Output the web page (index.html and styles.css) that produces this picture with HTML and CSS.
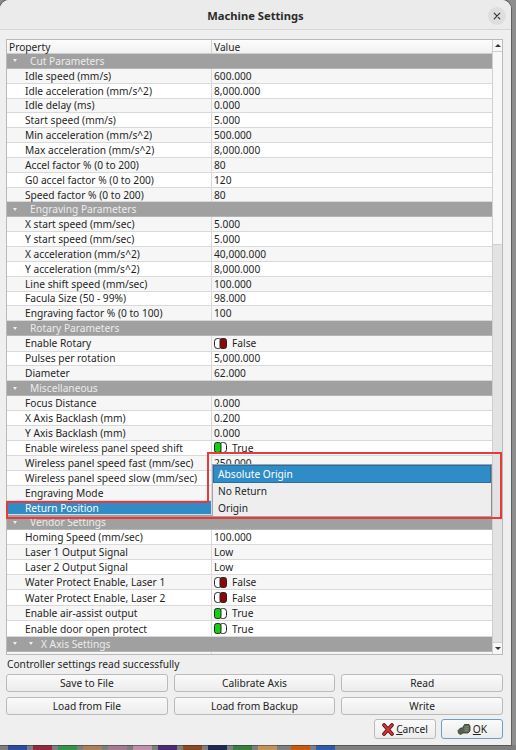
FILE: index.html
```html
<!DOCTYPE html>
<html>
<head>
<meta charset="utf-8">
<title>Machine Settings</title>
<link rel="stylesheet" href="styles.css">
</head>
<body>
<div class="desk">
  <div class="dialog">
    <div class="titlebar">
      <span></span>
      <span class="title">Machine Settings</span>
      <span class="close"><svg width="18" height="18" viewBox="0 0 18 18"><circle cx="9" cy="9" r="9" fill="#dedede"/><path d="M6.2 6.2 L11.8 11.8 M11.8 6.2 L6.2 11.8" stroke="#333" stroke-width="1.2" stroke-linecap="round"/></svg></span>
    </div>
    <div class="content">
      <div class="frame">
        <div class="tree">
          <div class="hdr"><div class="c1">Property</div><div class="c2">Value</div></div>

          <div class="sec"><span class="tri"></span>Cut Parameters</div>
          <div class="row a"><div class="c1">Idle speed (mm/s)</div><div class="c2">600.000</div></div>
          <div class="row"><div class="c1">Idle acceleration (mm/s^2)</div><div class="c2">8,000.000</div></div>
          <div class="row a"><div class="c1">Idle delay (ms)</div><div class="c2">0.000</div></div>
          <div class="row"><div class="c1">Start speed (mm/s)</div><div class="c2">5.000</div></div>
          <div class="row a"><div class="c1">Min acceleration (mm/s^2)</div><div class="c2">500.000</div></div>
          <div class="row"><div class="c1">Max acceleration (mm/s^2)</div><div class="c2">8,000.000</div></div>
          <div class="row a"><div class="c1">Accel factor % (0 to 200)</div><div class="c2">80</div></div>
          <div class="row"><div class="c1">G0 accel factor % (0 to 200)</div><div class="c2">120</div></div>
          <div class="row a"><div class="c1">Speed factor % (0 to 200)</div><div class="c2">80</div></div>

          <div class="sec"><span class="tri"></span>Engraving Parameters</div>
          <div class="row a"><div class="c1">X start speed (mm/sec)</div><div class="c2">5.000</div></div>
          <div class="row"><div class="c1">Y start speed (mm/sec)</div><div class="c2">5.000</div></div>
          <div class="row a"><div class="c1">X acceleration (mm/s^2)</div><div class="c2">40,000.000</div></div>
          <div class="row"><div class="c1">Y acceleration (mm/s^2)</div><div class="c2">8,000.000</div></div>
          <div class="row a"><div class="c1">Line shift speed (mm/sec)</div><div class="c2">100.000</div></div>
          <div class="row"><div class="c1">Facula Size (50 - 99%)</div><div class="c2">98.000</div></div>
          <div class="row a"><div class="c1">Engraving factor % (0 to 100)</div><div class="c2">100</div></div>

          <div class="sec"><span class="tri"></span>Rotary Parameters</div>
          <div class="row a tg"><div class="c1">Enable Rotary</div><div class="c2"><svg class="tog" width="13" height="11" viewBox="0 0 13 11"><rect x="0.5" y="0.5" width="7" height="10" rx="3" fill="#fff" stroke="#222"/><rect x="6" y="0.5" width="6.5" height="10" rx="2.2" fill="#8a0a0a" stroke="#222"/></svg>False</div></div>
          <div class="row"><div class="c1">Pulses per rotation</div><div class="c2">5,000.000</div></div>
          <div class="row a"><div class="c1">Diameter</div><div class="c2">62.000</div></div>

          <div class="sec"><span class="tri"></span>Miscellaneous</div>
          <div class="row a"><div class="c1">Focus Distance</div><div class="c2">0.000</div></div>
          <div class="row"><div class="c1">X Axis Backlash (mm)</div><div class="c2">0.200</div></div>
          <div class="row a"><div class="c1">Y Axis Backlash (mm)</div><div class="c2">0.000</div></div>
          <div class="row tg"><div class="c1">Enable wireless panel speed shift</div><div class="c2"><svg class="tog" width="13" height="11" viewBox="0 0 13 11"><rect x="5.5" y="0.5" width="7" height="10" rx="3" fill="#fff" stroke="#222"/><rect x="0.5" y="0.5" width="6.5" height="10" rx="2.2" fill="#10d010" stroke="#222"/></svg>True</div></div>
          <div class="row a"><div class="c1">Wireless panel speed fast (mm/sec)</div><div class="c2 cut"><span class="cuttext">250.000</span></div></div>
          <div class="row"><div class="c1">Wireless panel speed slow (mm/sec)</div><div class="c2"></div></div>
          <div class="row a"><div class="c1">Engraving Mode</div><div class="c2"></div></div>
          <div class="row sel"><div class="c1">Return Position</div><div class="c2"></div></div>

          <div class="sec"><span class="tri"></span>Vendor Settings</div>
          <div class="row"><div class="c1">Homing Speed (mm/sec)</div><div class="c2">100.000</div></div>
          <div class="row a"><div class="c1">Laser 1 Output Signal</div><div class="c2">Low</div></div>
          <div class="row"><div class="c1">Laser 2 Output Signal</div><div class="c2">Low</div></div>
          <div class="row a tg"><div class="c1">Water Protect Enable, Laser 1</div><div class="c2"><svg class="tog" width="13" height="11" viewBox="0 0 13 11"><rect x="0.5" y="0.5" width="7" height="10" rx="3" fill="#fff" stroke="#222"/><rect x="6" y="0.5" width="6.5" height="10" rx="2.2" fill="#8a0a0a" stroke="#222"/></svg>False</div></div>
          <div class="row tg"><div class="c1">Water Protect Enable, Laser 2</div><div class="c2"><svg class="tog" width="13" height="11" viewBox="0 0 13 11"><rect x="0.5" y="0.5" width="7" height="10" rx="3" fill="#fff" stroke="#222"/><rect x="6" y="0.5" width="6.5" height="10" rx="2.2" fill="#8a0a0a" stroke="#222"/></svg>False</div></div>
          <div class="row a tg"><div class="c1">Enable air-assist output</div><div class="c2"><svg class="tog" width="13" height="11" viewBox="0 0 13 11"><rect x="5.5" y="0.5" width="7" height="10" rx="3" fill="#fff" stroke="#222"/><rect x="0.5" y="0.5" width="6.5" height="10" rx="2.2" fill="#10d010" stroke="#222"/></svg>True</div></div>
          <div class="row tg"><div class="c1">Enable door open protect</div><div class="c2"><svg class="tog" width="13" height="11" viewBox="0 0 13 11"><rect x="5.5" y="0.5" width="7" height="10" rx="3" fill="#fff" stroke="#222"/><rect x="0.5" y="0.5" width="6.5" height="10" rx="2.2" fill="#10d010" stroke="#222"/></svg>True</div></div>

          <div class="sec sub"><span class="tri"></span><span class="tri"></span>X Axis Settings</div>
          <div class="row a"><div class="c1"></div><div class="c2"></div></div>
        </div>
        <div class="sbar">
          <div class="sbtn"><span class="up"></span></div>
          <div class="thumb"></div>
          <div class="track"></div>
          <div class="sbtn"><span class="down"></span></div>
        </div>
      </div>
      <div class="status">Controller settings read successfully</div>
      <div class="btns">
        <button class="btn">Save to File</button>
        <button class="btn">Calibrate Axis</button>
        <button class="btn">Read</button>
        <button class="btn">Load from File</button>
        <button class="btn">Load from Backup</button>
        <button class="btn">Write</button>
      </div>
      <div class="okrow">
        <button class="btn dlg"><svg width="12" height="13" viewBox="0 0 12 13"><path d="M2 2 L10 11 M10 2 L2 11" stroke="#3a1010" stroke-width="3.6" stroke-linecap="round"/><path d="M2 2 L10 11 M10 2 L2 11" stroke="#e03030" stroke-width="2" stroke-linecap="round"/></svg><span><u>C</u>ancel</span></button>
        <button class="btn dlg def"><svg width="14" height="12" viewBox="0 0 14 12"><path d="M1 7.5 L3.5 5 L5.5 5 L7.5 1.5 L12 1.5 L13 3 L13 8 L11 10 L6 10 L3.5 11.5 L1.5 10.2 Z" fill="#566152" stroke="#2f362c" stroke-width="0.8"/><path d="M7.5 3.8 L11.8 3.8 M7.5 5.8 L11.8 5.8 M7.5 7.8 L11.3 7.8" stroke="#8e9b86" stroke-width="0.9"/></svg><span><u>O</u>K</span></button>
      </div>
    </div>

    <div class="popup">
      <div class="item on">Absolute Origin</div>
      <div class="item">No Return</div>
      <div class="item">Origin</div>
    </div>

    <svg class="mark" width="511" height="745" viewBox="0 0 511 745"><polygon points="208,453 501,453 501,518 7,518 7,502 208,502" fill="none" stroke="#e8393d" stroke-width="2"/></svg>
  </div>
  <div class="strip">
    <span style="background:#2b4d9a"></span>
    <span style="background:#8d2d3c"></span>
    <span style="background:#3f8d4a"></span>
    <span style="background:#a8805e"></span>
    <span style="background:#a27a92"></span>
    <span style="background:#c290aa"></span>
    <span style="background:#4f2a6e"></span>
    <span style="background:#8c4a22"></span>
    <span style="background:#1c2b52"></span>
    <span style="background:#3b7d3c"></span>
    <span style="background:#c29262"></span>
    <span class="gap" style="background:#c25c14"></span>
    <span style="background:#2d5ca2"></span>
  </div>
</div>
</body>
</html>
```

FILE: styles.css
```css
* { box-sizing: border-box; }
html, body { margin: 0; padding: 0; }
body {
  width: 516px;
  height: 750px;
  overflow: hidden;
  background: #8e8e8e;
  font-family: "Noto Sans", "DejaVu Sans", sans-serif;
  font-size: 10.2px;
  color: #1f1f1f;
}
.desk { width: 516px; height: 750px; }
.dialog {
  position: relative;
  width: 511px;
  height: 745px;
  background: #efefef;
  border-radius: 9px 9px 0 0;
  box-shadow: 0 0 0 1px rgba(40,40,40,0.45);
}
.titlebar {
  height: 30px;
  display: grid;
  grid-template-columns: 1fr auto 1fr;
  align-items: center;
  background: #ebebeb;
  border-bottom: 1px solid #d6d6d6;
  border-radius: 9px 9px 0 0;
}
.title { font-weight: bold; font-size: 11.2px; color: #2b2b2b; padding-top: 2px; }
.close { justify-self: end; margin-right: 5px; display: flex; padding-top: 2px; }

.content { padding: 9px 8px 0 6px; }
.frame {
  display: flex;
  height: 616px;
  border: 1px solid #b9b9b9;
  background: #fff;
}
.tree { width: 486px; height: 614px; overflow: hidden; background: #fff; }
.hdr {
  display: flex;
  height: 14px;
  background: linear-gradient(#fdfdfd, #f1f1f1);
  border-bottom: 1px solid #cfcfcf;
  line-height: 14px;
}
.hdr .c1 { width: 205px; padding-left: 2px; border-right: 1px solid #d4d4d4; }
.hdr .c2 { padding-left: 2px; }

.row {
  display: flex;
  height: 14.85px;
  border-bottom: 1px solid #d9d9d9;
  background: #fff;
  align-items: center;
}
.row.tg { height: 15.5px; }
.row.a { background: #f6f6f6; }
.row .c1 { width: 205px; height: 100%; padding-left: 18px; border-right: 1px solid #d9d9d9; display: flex; align-items: center; white-space: nowrap; }
.row .c2 { flex: 1; padding-left: 2px; display: flex; align-items: center; white-space: nowrap; }
.row .c2.cut { align-self: flex-start; align-items: flex-start; height: 7.5px; overflow: hidden; }
.cuttext { display: block; height: 7.5px; line-height: 14px; overflow: hidden; }
.row.sel .c1 { background: #308cc6; color: #fff; }
.tog { margin-right: 5px; flex: none; }

.sec {
  display: flex;
  align-items: center;
  height: 14.85px;
  background: #a0a0a0;
  border-bottom: 1px solid #b4b4b4;
  color: #ececec;
  padding-left: 5px;
  white-space: nowrap;
}
.tri {
  width: 0; height: 0;
  border-left: 2.5px solid transparent;
  border-right: 2.5px solid transparent;
  border-top: 3px solid #eeeeee;
  margin-right: 13px;
  margin-left: 1px;
}
.sec.sub .tri + .tri { margin-right: 8px; margin-left: -1px; }

.sbar {
  width: 10px;
  display: flex;
  flex-direction: column;
  border-left: 1px solid #cfcfcf;
  background: #e3e3e3;
}
.sbtn {
  height: 12px;
  background: #f7f7f7;
  border-bottom: 1px solid #cfcfcf;
  display: flex;
  align-items: center;
  justify-content: center;
}
.sbtn:last-child { border-bottom: none; border-top: 1px solid #cfcfcf; }
.up { width: 0; height: 0; border-left: 3px solid transparent; border-right: 3px solid transparent; border-bottom: 3px solid #333; }
.down { width: 0; height: 0; border-left: 3px solid transparent; border-right: 3px solid transparent; border-top: 3px solid #333; }
.thumb { height: 193px; background: #f8f8f8; border-bottom: 1px solid #d0d0d0; }
.track { flex: 1; }

.status { margin-top: 2px; height: 14px; line-height: 14px; padding-left: 1px; }
.btns {
  margin-top: 3px;
  display: grid;
  grid-template-columns: repeat(3, 1fr);
  column-gap: 6px;
  row-gap: 5px;
  width: 497px;
}
.btn {
  font: inherit;
  color: #222;
  height: 18px;
  padding: 0;
  border: 1px solid #bababa;
  border-radius: 3px;
  background: linear-gradient(#fafafa, #ececec);
  display: flex;
  align-items: center;
  justify-content: center;
}
.okrow {
  margin-top: 4px;
  width: 497px;
  display: flex;
  justify-content: flex-end;
  gap: 5px;
}
.btn.dlg { width: 62px; height: 20px; gap: 2px; }
.btn.dlg u { text-decoration: underline; text-underline-offset: 1px; }
.btn.def { border-color: #6d9cc9; }

.popup {
  position: absolute;
  left: 212px;
  top: 464px;
  width: 280px;
  height: 53px;
  background: #eeeeee;
  border: 1px solid #a4a4a4;
  border-right-color: #8a8a8a;
}
.item { height: 17.3px; line-height: 17px; padding-left: 5px; }
.item.on { background: #308cc6; color: #fff; border: 1px solid #2470a4; padding-left: 4px; height: 18px; line-height: 16px; }

.mark { position: absolute; left: 0; top: 0; pointer-events: none; }

.strip {
  height: 5px;
  display: flex;
  gap: 6px;
  padding-left: 8px;
  background: #7e7e7e;
}
.strip span { width: 19px; height: 5px; }
.strip span.gap { margin-left: 8px; }
```
